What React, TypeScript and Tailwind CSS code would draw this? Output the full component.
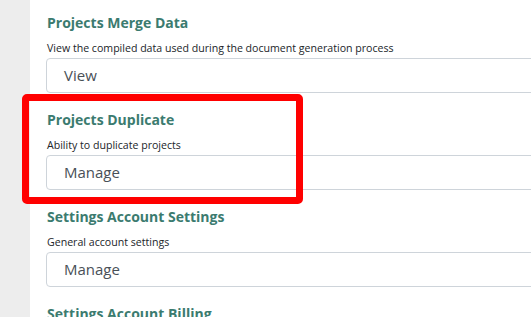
const sections = [
  {
    title: "Projects Merge Data",
    description: "View the compiled data used during the document generation process",
    action: "View",
  },
  {
    title: "Projects Duplicate",
    description: "Ability to duplicate projects",
    action: "Manage",
  },
  {
    title: "Settings Account Settings",
    description: "General account settings",
    action: "Manage",
  },
  {
    title: "Settings Account Billing",
    description: "Manage billing details and invoices",
    action: "Manage",
  },
];

export default function App() {
  return (
    <div className="relative flex h-[317px] w-[531px] overflow-hidden bg-white font-['Open_Sans','Noto_Sans',sans-serif]">
      {/* left gutter */}
      <div className="w-[30px] shrink-0 bg-[#ededed]" />

      <div className="flex min-w-[620px] flex-col pl-[16px] pt-[13px]">
        {sections.map((s) => (
          <section key={s.title} className="mb-[17px] flex flex-col">
            <h3 className="pl-px text-[14px] leading-[20px] font-bold text-[#3b7b6f]">{s.title}</h3>
            <p className="mt-[8px] pl-px text-[10.6px] leading-[15px] text-[#212529]">{s.description}</p>
            <div className="mt-[2px] flex h-[35px] items-center rounded-[4px] border border-[#ced4da] bg-white pl-[17px] text-[15px] text-[#495057]">
              {s.action}
            </div>
          </section>
        ))}
      </div>

      {/* highlight annotation */}
      <div className="pointer-events-none absolute left-[22px] top-[94px] h-[110px] w-[281px] rounded-[5px] border-[7px] border-[#ff0000]" />
    </div>
  );
}
